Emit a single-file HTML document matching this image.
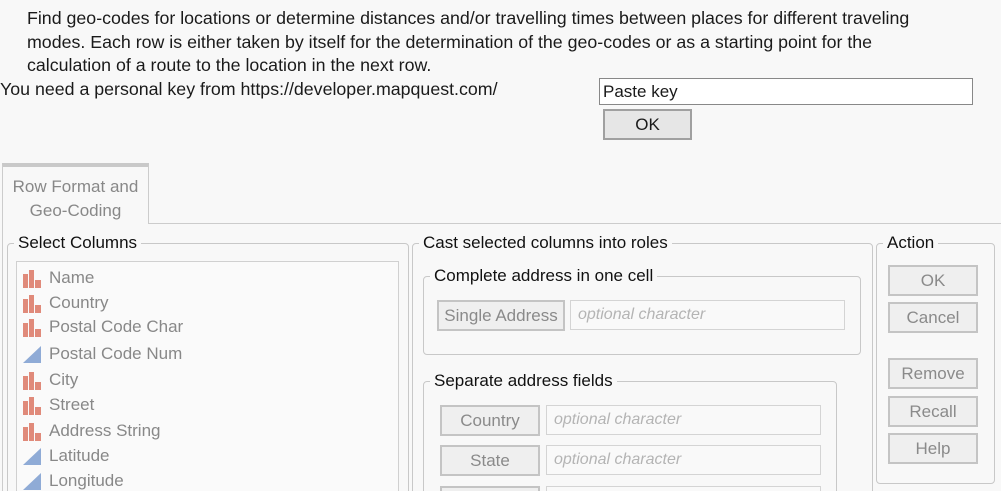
<!DOCTYPE html><html><head><style>
html,body{margin:0;width:1001px;height:491px;overflow:hidden}
body{background:#f8f8f8;font-family:"Liberation Sans",sans-serif;font-size:16px;color:#1a1a1a}
#w{position:relative;width:1001px;height:491px;overflow:hidden}
.a{position:absolute;white-space:nowrap}
.g{position:absolute;border:1px solid #c8c8c8;border-radius:4px}
.gt{position:absolute;background:#f8f8f8;padding:0 4px;top:-11px;left:6px;font-size:17px;color:#111}
.b{position:absolute;border:2px solid #c4c4c4;background:#efefef;color:#8a8a8a;text-align:center;box-sizing:border-box;font-size:17px}
.in{position:absolute;border:1px solid #d4d4d4;background:#f9f9f9;color:#b4b4b4;font-style:italic;box-sizing:border-box;padding-left:7px;font-size:16px}
.it{position:absolute;left:23px;color:#888;font-size:17px}
.it svg{position:absolute;left:0;top:2px}
.it span{position:absolute;left:26px;top:0;white-space:nowrap}
</style></head><body><div id="w">
<div class="a" style="left:27px;top:7px;line-height:23.5px;font-size:17.8px">Find geo-codes for locations or determine distances and/or travelling times between places for different traveling<br>modes. Each row is either taken by itself for the determination of the geo-codes or as a starting point for the<br>calculation of a route to the location in the next row.</div>
<div class="a" style="left:0;top:79px;font-size:17.8px">You need a personal key from https://developer.mapquest.com/</div>
<div class="a" style="left:599px;top:78px;width:374px;height:27px;border:1px solid #888;background:#fff;box-sizing:border-box;padding:3px 0 0 3px;font-size:17px">Paste key</div>
<div class="a" style="left:603px;top:109px;width:89px;height:31px;border:2px solid #a0a0a0;background:#e6e6e6;box-sizing:border-box;text-align:center;line-height:27px;font-size:17px">OK</div>
<div class="a" style="left:2px;top:163px;width:147px;height:61px;border:1px solid #ccc;border-top:4px solid #c9c9c9;border-bottom:none;box-sizing:border-box;background:#f8f8f8;text-align:center;color:#888;font-size:17px;line-height:24px;padding-top:8px;z-index:2">Row Format and<br>Geo-Coding</div>
<div class="a" style="left:2px;top:223px;width:999px;height:268px;border-top:1px solid #ccc;border-left:1px solid #ccc;box-sizing:border-box"></div>
<div class="g" style="left:7px;top:243px;width:400px;height:260px"><div class="gt">Select Columns</div></div>
<div class="a" style="left:16px;top:261px;width:381px;height:240px;border:1px solid #d0d0d0;background:#fafafa"></div>
<div class="g" style="left:412px;top:243px;width:459px;height:260px"><div class="gt">Cast selected columns into roles</div></div>
<div class="g" style="left:423px;top:276px;width:436px;height:77px"><div class="gt">Complete address in one cell</div></div>
<div class="b" style="left:437px;top:300px;width:128px;height:31px;line-height:27px">Single Address</div>
<div class="in" style="left:570px;top:300px;width:275px;height:30px;line-height:28px">optional character</div>
<div class="g" style="left:423px;top:381px;width:412px;height:130px"><div class="gt">Separate address fields</div></div>
<div class="b" style="left:440px;top:405px;width:100px;height:31px;line-height:27px">Country</div>
<div class="in" style="left:546px;top:405px;width:275px;height:30px;line-height:28px">optional character</div>
<div class="b" style="left:440px;top:445px;width:100px;height:31px;line-height:27px">State</div>
<div class="in" style="left:546px;top:445px;width:275px;height:30px;line-height:28px">optional character</div>
<div class="b" style="left:440px;top:486px;width:100px;height:31px"></div>
<div class="in" style="left:546px;top:486px;width:275px;height:30px"></div>
<div class="g" style="left:876px;top:243px;width:117px;height:239px"><div class="gt">Action</div></div>
<div class="b" style="left:888px;top:265px;width:90px;height:31px;line-height:27px">OK</div>
<div class="b" style="left:888px;top:302px;width:90px;height:31px;line-height:27px">Cancel</div>
<div class="b" style="left:888px;top:358px;width:90px;height:31px;line-height:27px">Remove</div>
<div class="b" style="left:888px;top:396px;width:90px;height:31px;line-height:27px">Recall</div>
<div class="b" style="left:888px;top:433px;width:90px;height:31px;line-height:27px">Help</div>
<div class="it" style="top:268px"><svg width="19" height="18"><rect x="0" y="4" width="5" height="14" fill="#e08a7a"/><rect x="6" y="0" width="5" height="18" fill="#e08a7a"/><rect x="12" y="10" width="6" height="8" fill="#e08a7a"/></svg><span>Name</span></div>
<div class="it" style="top:293px"><svg width="19" height="18"><rect x="0" y="4" width="5" height="14" fill="#e08a7a"/><rect x="6" y="0" width="5" height="18" fill="#e08a7a"/><rect x="12" y="10" width="6" height="8" fill="#e08a7a"/></svg><span>Country</span></div>
<div class="it" style="top:317px"><svg width="19" height="18"><rect x="0" y="4" width="5" height="14" fill="#e08a7a"/><rect x="6" y="0" width="5" height="18" fill="#e08a7a"/><rect x="12" y="10" width="6" height="8" fill="#e08a7a"/></svg><span>Postal Code Char</span></div>
<div class="it" style="top:344px"><svg width="19" height="18"><polygon points="0,17 18,0 18,17" fill="#8fabd6"/></svg><span>Postal Code Num</span></div>
<div class="it" style="top:370px"><svg width="19" height="18"><rect x="0" y="4" width="5" height="14" fill="#e08a7a"/><rect x="6" y="0" width="5" height="18" fill="#e08a7a"/><rect x="12" y="10" width="6" height="8" fill="#e08a7a"/></svg><span>City</span></div>
<div class="it" style="top:395px"><svg width="19" height="18"><rect x="0" y="4" width="5" height="14" fill="#e08a7a"/><rect x="6" y="0" width="5" height="18" fill="#e08a7a"/><rect x="12" y="10" width="6" height="8" fill="#e08a7a"/></svg><span>Street</span></div>
<div class="it" style="top:421px"><svg width="19" height="18"><rect x="0" y="4" width="5" height="14" fill="#e08a7a"/><rect x="6" y="0" width="5" height="18" fill="#e08a7a"/><rect x="12" y="10" width="6" height="8" fill="#e08a7a"/></svg><span>Address String</span></div>
<div class="it" style="top:446px"><svg width="19" height="18"><polygon points="0,17 18,0 18,17" fill="#8fabd6"/></svg><span>Latitude</span></div>
<div class="it" style="top:471px"><svg width="19" height="18"><polygon points="0,17 18,0 18,17" fill="#8fabd6"/></svg><span>Longitude</span></div>
</div></body></html>
